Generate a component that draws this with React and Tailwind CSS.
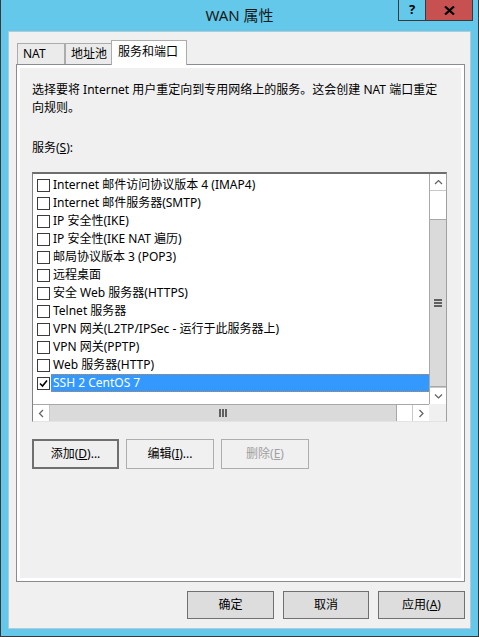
const services = [
  { name: "Internet 邮件访问协议版本 4 (IMAP4)" },
  { name: "Internet 邮件服务器(SMTP)" },
  { name: "IP 安全性(IKE)" },
  { name: "IP 安全性(IKE NAT 遍历)" },
  { name: "邮局协议版本 3 (POP3)" },
  { name: "远程桌面" },
  { name: "安全 Web 服务器(HTTPS)" },
  { name: "Telnet 服务器" },
  { name: "VPN 网关(L2TP/IPSec - 运行于此服务器上)" },
  { name: "VPN 网关(PPTP)" },
  { name: "Web 服务器(HTTP)" },
  { name: "SSH 2 CentOS 7", checked: true, selected: true },
];

function Chevron({ dir }) {
  const d = {
    up: "M1 5 L4.5 1.5 L8 5",
    down: "M1 1.5 L4.5 5 L8 1.5",
    left: "M5 1 L1.5 4.5 L5 8",
    right: "M1.5 1 L5 4.5 L1.5 8",
  }[dir];
  const vert = dir === "up" || dir === "down";
  return (
    <svg width={vert ? 9 : 7} height={vert ? 7 : 9} viewBox={vert ? "0 0 9 7" : "0 0 7 9"}>
      <path d={d} fill="none" stroke="#606060" strokeWidth="1.2" />
    </svg>
  );
}

function ServiceRow({ name, checked, selected }) {
  return (
    <div className="flex h-[18px] items-center">
      <span className="ml-[4px] flex h-[13px] w-[13px] shrink-0 items-center justify-center border border-[#3c3c3c] bg-white">
        {checked && (
          <svg width="9" height="9" viewBox="0 0 9 9">
            <path d="M1 4.5 L3.5 7 L8 1.5" fill="none" stroke="#000" strokeWidth="1.6" />
          </svg>
        )}
      </span>
      <span
        className={
          selected
            ? "ml-px flex h-full flex-1 items-center whitespace-nowrap border-y border-dotted border-[#d2823c] bg-[#3399ff] pl-[2px] text-white"
            : "ml-px flex h-full flex-1 items-center whitespace-nowrap pl-[2px] text-black"
        }
      >
        {name}
      </span>
    </div>
  );
}

export default function App() {
  return (
    <div className="flex h-[637px] w-[479px] flex-col border-x border-b border-[#383838] bg-[#63c8ea] px-[7px] pb-[7px] font-[family-name:'Segoe_UI','Noto_Sans','Noto_Sans_CJK_SC',sans-serif] text-[12px] text-black">
      {/* title bar */}
      <div className="relative flex h-[31px] shrink-0 items-center justify-center">
        <span className="text-[15px] text-[#1a1a1a]">WAN 属性</span>
        <div className="absolute right-[-2px] top-0 flex h-[21px]">
          <div className="flex w-[28px] items-center justify-center border-x border-b border-[#3a3a3a] text-[13px] font-bold">?</div>
          <div className="flex w-[47px] items-center justify-center border-b border-r border-[#3a3a3a] bg-[#c75050]">
            <svg width="11" height="9" viewBox="0 0 11 9">
              <path d="M1 0.5 L10 8.5 M10 0.5 L1 8.5" stroke="#000" strokeWidth="2.2" />
            </svg>
          </div>
        </div>
      </div>

      {/* client area */}
      <div className="flex flex-1 flex-col border border-[#b2cad6] bg-[#f0f0f0] pt-[8px]">
        {/* tabs */}
        <div className="ml-[8px] flex h-[24px] items-end">
          <div className="flex h-[21px] w-[48px] items-center border-x border-t border-[#acacac] bg-[#ebebeb] pl-[5px]">NAT</div>
          <div className="flex h-[21px] w-[46px] items-center border-l border-t border-[#acacac] bg-[#ebebeb] pl-[5px]">地址池</div>
          <div className="relative z-10 -mb-px flex h-[25px] w-[76px] items-center border-x border-t border-[#acacac] bg-white pb-[2px] pl-[6px]">服务和端口</div>
        </div>

        {/* tab panel */}
        <div className="ml-[7px] h-[518px] w-[449px] border border-[#898c95] bg-white p-[3px]">
          <div className="flex h-full flex-col bg-[#f0f0f0] pl-[12px] pt-[13px]">
            <p className="leading-[18px]">
              <span className="whitespace-nowrap">选择要将 Internet 用户重定向到专用网络上的服务。这会创建 NAT 端口重定</span>
              <br />
              <span>向规则。</span>
            </p>
            <div className="mt-[22px] leading-[18px]">
              服务(<span className="underline">S</span>):
            </div>

            {/* list box */}
            <div className="mt-[15px] flex h-[250px] w-[415px] flex-col border-b border-l border-r border-t-2 border-b-[#e3e3e3] border-l-[#828282] border-r-[#a0a0a0] border-t-[#6e6e6e] bg-white">
              <div className="flex h-[230px]">
                <div className="flex-1 overflow-hidden pt-[2px]">
                  {services.map((s) => (
                    <ServiceRow key={s.name} {...s} />
                  ))}
                </div>
                {/* vertical scrollbar */}
                <div className="flex w-[17px] flex-col border-l border-[#a8a8a8]">
                  <div className="flex h-[17px] items-center justify-center border-b border-[#c8c8c8] bg-white">
                    <Chevron dir="up" />
                  </div>
                  <div className="h-[28px] bg-white" />
                  <div className="flex h-[168px] items-center justify-center border-y border-[#a8a8a8] bg-[#dadada]">
                    <div className="flex flex-col gap-[1px]">
                      <span className="h-[2px] w-[8px] bg-[#606060]" />
                      <span className="h-[2px] w-[8px] bg-[#606060]" />
                      <span className="h-[2px] w-[8px] bg-[#606060]" />
                    </div>
                  </div>
                  <div className="flex flex-1 items-center justify-center border-t border-[#c8c8c8] bg-white">
                    <Chevron dir="down" />
                  </div>
                </div>
              </div>
              {/* horizontal scrollbar */}
              <div className="flex h-[17px]">
                <div className="flex w-[396px] border-t border-[#a8a8a8]">
                  <div className="flex w-[17px] items-center justify-center border-r border-[#c8c8c8] bg-white">
                    <Chevron dir="left" />
                  </div>
                  <div className="flex w-[347px] items-center justify-center border-r border-[#a8a8a8] bg-[#dadada]">
                    <div className="flex gap-[1px]">
                      <span className="h-[8px] w-[2px] bg-[#606060]" />
                      <span className="h-[8px] w-[2px] bg-[#606060]" />
                      <span className="h-[8px] w-[2px] bg-[#606060]" />
                    </div>
                  </div>
                  <div className="w-[15px] bg-white" />
                  <div className="flex flex-1 items-center justify-center border-l border-[#c8c8c8] bg-white">
                    <Chevron dir="right" />
                  </div>
                </div>
                <div className="flex-1 bg-[#f0f0f0]" />
              </div>
            </div>

            {/* list actions */}
            <div className="mt-[17px] flex gap-[6px]">
              <button className="h-[30px] w-[87px] border-2 border-[#6f6f6f] bg-[#efefef]">
                添加(<span className="underline">D</span>)...
              </button>
              <button className="ml-px h-[30px] w-[88px] border border-[#adadad] bg-[#f0f0f0]">
                编辑(<span className="underline">I</span>)...
              </button>
              <button className="ml-px h-[30px] w-[88px] border border-[#adadad] bg-[#f0f0f0] text-[#a0a0a0]">
                删除(<span className="underline">E</span>)
              </button>
            </div>
          </div>
        </div>

        {/* dialog buttons */}
        <div className="mr-[5px] mt-[9px] flex justify-end gap-[9px]">
          <button className="h-[28px] w-[87px] border border-[#707070] bg-[#dddddd]">确定</button>
          <button className="h-[28px] w-[86px] border border-[#707070] bg-[#dddddd]">取消</button>
          <button className="h-[28px] w-[87px] border border-[#707070] bg-[#dddddd]">
            应用(<span className="underline">A</span>)
          </button>
        </div>
      </div>
    </div>
  );
}
